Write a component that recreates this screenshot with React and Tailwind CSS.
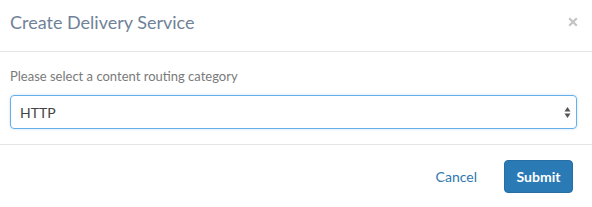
export default function App() {
  return (
    <div className="w-[592px] h-[207px] bg-white flex flex-col" style={{ fontFamily: 'Lato, "Liberation Sans", sans-serif' }}>
      <div className="h-[52px] border-b border-[#e5e5e5] flex items-center justify-between pl-[10px] pr-[14px]">
        <h4 className="text-[18px] text-[#6f8299] leading-none -mt-[8px]">Create Delivery Service</h4>
        <button className="text-[#c4c4c4] -mt-[8px]">
          <svg width="10" height="10" viewBox="0 0 10 10">
            <path d="M1.2 1.2 L8.8 8.8 M8.8 1.2 L1.2 8.8" stroke="currentColor" strokeWidth="2.2" />
          </svg>
        </button>
      </div>
      <div className="h-[93px] border-b border-[#e5e5e5] px-[10px] pt-[15px]">
        <label className="block text-[13px] text-[#7a7a7a] leading-[18px]">Please select a content routing category</label>
        <div className="mt-[10px] h-[34px] w-[567px] border border-[#66afe9] rounded-[4px] flex items-center justify-between pl-[9px] pr-[5px] shadow-[0_0_3px_rgba(102,175,233,0.35)]">
          <span className="text-[14px] text-[#444]">HTTP</span>
          <svg width="7" height="13" viewBox="0 0 7 13">
            <path d="M3.5 1 L6.5 5.5 L0.5 5.5 Z" fill="#555" />
            <path d="M0.5 7.5 L6.5 7.5 L3.5 12 Z" fill="#555" />
          </svg>
        </div>
      </div>
      <div className="flex justify-end items-start pt-[15px] pr-[19px] gap-[27px]">
        <button className="h-[33px] text-[14px] text-[#2f77b0]">Cancel</button>
        <button className="h-[33px] w-[69px] rounded-[4px] bg-[#2a7ab5] text-white text-[14px] font-bold border border-[#276ea3]">Submit</button>
      </div>
    </div>
  );
}
